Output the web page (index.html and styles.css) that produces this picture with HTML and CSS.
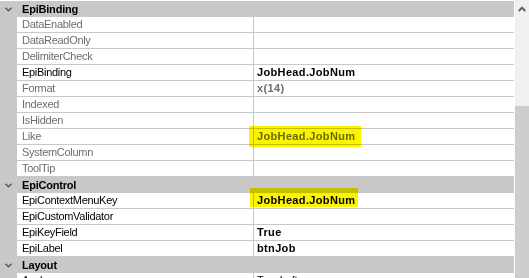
FILE: index.html
```html
<!DOCTYPE html>
<html>
<head>
<meta charset="utf-8">
<link rel="stylesheet" href="styles.css">
</head>
<body>
<div class="frame">
  <div class="main">
    <div class="cat"><span class="chev"><svg width="7" height="5" viewBox="0 0 7 5"><polyline points="0.5,0.8 3.5,3.8 6.5,0.8" fill="none" stroke="#555" stroke-width="1.4"/></svg></span><span class="cat-label">EpiBinding</span></div>
    <div class="row"><div class="gut"></div><div class="name dim">DataEnabled</div><div class="val"></div></div>
    <div class="row"><div class="gut"></div><div class="name dim">DataReadOnly</div><div class="val"></div></div>
    <div class="row"><div class="gut"></div><div class="name dim">DelimiterCheck</div><div class="val"></div></div>
    <div class="row"><div class="gut"></div><div class="name">EpiBinding</div><div class="val">JobHead.JobNum</div></div>
    <div class="row"><div class="gut"></div><div class="name dim">Format</div><div class="val dim">x(14)</div></div>
    <div class="row"><div class="gut"></div><div class="name dim">Indexed</div><div class="val"></div></div>
    <div class="row"><div class="gut"></div><div class="name dim">IsHidden</div><div class="val"></div></div>
    <div class="row"><div class="gut"></div><div class="name dim">Like</div><div class="val dim">JobHead.JobNum</div></div>
    <div class="row"><div class="gut"></div><div class="name dim">SystemColumn</div><div class="val"></div></div>
    <div class="row"><div class="gut"></div><div class="name dim">ToolTip</div><div class="val"></div></div>
    <div class="cat"><span class="chev"><svg width="7" height="5" viewBox="0 0 7 5"><polyline points="0.5,0.8 3.5,3.8 6.5,0.8" fill="none" stroke="#555" stroke-width="1.4"/></svg></span><span class="cat-label">EpiControl</span></div>
    <div class="row"><div class="gut"></div><div class="name">EpiContextMenuKey</div><div class="val">JobHead.JobNum</div></div>
    <div class="row"><div class="gut"></div><div class="name">EpiCustomValidator</div><div class="val"></div></div>
    <div class="row"><div class="gut"></div><div class="name">EpiKeyField</div><div class="val">True</div></div>
    <div class="row"><div class="gut"></div><div class="name">EpiLabel</div><div class="val">btnJob</div></div>
    <div class="cat"><span class="chev"><svg width="7" height="5" viewBox="0 0 7 5"><polyline points="0.5,0.8 3.5,3.8 6.5,0.8" fill="none" stroke="#555" stroke-width="1.4"/></svg></span><span class="cat-label">Layout</span></div>
    <div class="row"><div class="gut"></div><div class="name">Anchor</div><div class="val norm">Top, Left</div></div>
  </div>
  <div class="scroll">
    <div class="arrow"><svg width="8" height="6" viewBox="0 0 8 6"><polyline points="0.8,5 4,1.6 7.2,5" fill="none" stroke="#606060" stroke-width="2"/></svg></div>
    <div class="thumb"></div>
  </div>
  <div class="mark mark-like"></div>
  <div class="mark mark-ctx"></div>
</div>
</body>
</html>
```
FILE: styles.css
```css
html, body {
  margin: 0;
  padding: 0;
  background: #ffffff;
  overflow: hidden;
}
.frame {
  position: relative;
  width: 529px;
  height: 278px;
  overflow: hidden;
  display: flex;
  font-family: "Liberation Sans", Arial, sans-serif;
  font-size: 11px;
  color: #000;
}
.main {
  width: 514px;
  padding-top: 1px;
  background: #fff;
}
.cat {
  height: 16px;
  background: #c8c8c8;
  display: flex;
  align-items: center;
}
.chev {
  width: 17px;
  display: flex;
  justify-content: center;
  padding-top: 1px;
  padding-left: 0px;
}
.cat-label {
  padding-left: 5px;
  font-weight: bold;
  letter-spacing: -0.2px;
  line-height: 16px;
}
.row {
  display: flex;
  height: 16px;
}
.gut {
  width: 17px;
  background: #c8c8c8;
  flex: none;
}
.name {
  width: 231px;
  flex: none;
  padding-left: 5px;
  line-height: 15px;
  border-bottom: 1px solid #c8c8c8;
  border-right: 1px solid #c8c8c8;
  letter-spacing: -0.3px;
  white-space: nowrap;
}
.val {
  flex: 1;
  padding-left: 3px;
  line-height: 15px;
  border-bottom: 1px solid #c8c8c8;
  font-weight: bold;
  letter-spacing: 0.35px;
  white-space: nowrap;
}
.val.norm {
  font-weight: normal;
  letter-spacing: -0.2px;
}
.dim {
  color: #6d6d6d;
}
.scroll {
  width: 14px;
  margin-left: 1px;
  background: #f0f0f0;
  display: flex;
  flex-direction: column;
  align-items: center;
}
.arrow {
  height: 17px;
  display: flex;
  align-items: center;
  justify-content: center;
  width: 14px;
  padding-bottom: 1px;
}
.thumb {
  margin-top: 88px;
  width: 14px;
  flex: 1;
  background: #cdcdcd;
}
.mark {
  position: absolute;
  background: #fbf400;
  mix-blend-mode: multiply;
}
.mark-like {
  left: 249px;
  top: 126px;
  width: 112px;
  height: 21px;
}
.mark-ctx {
  left: 250px;
  top: 188px;
  width: 108px;
  height: 19px;
}
```
